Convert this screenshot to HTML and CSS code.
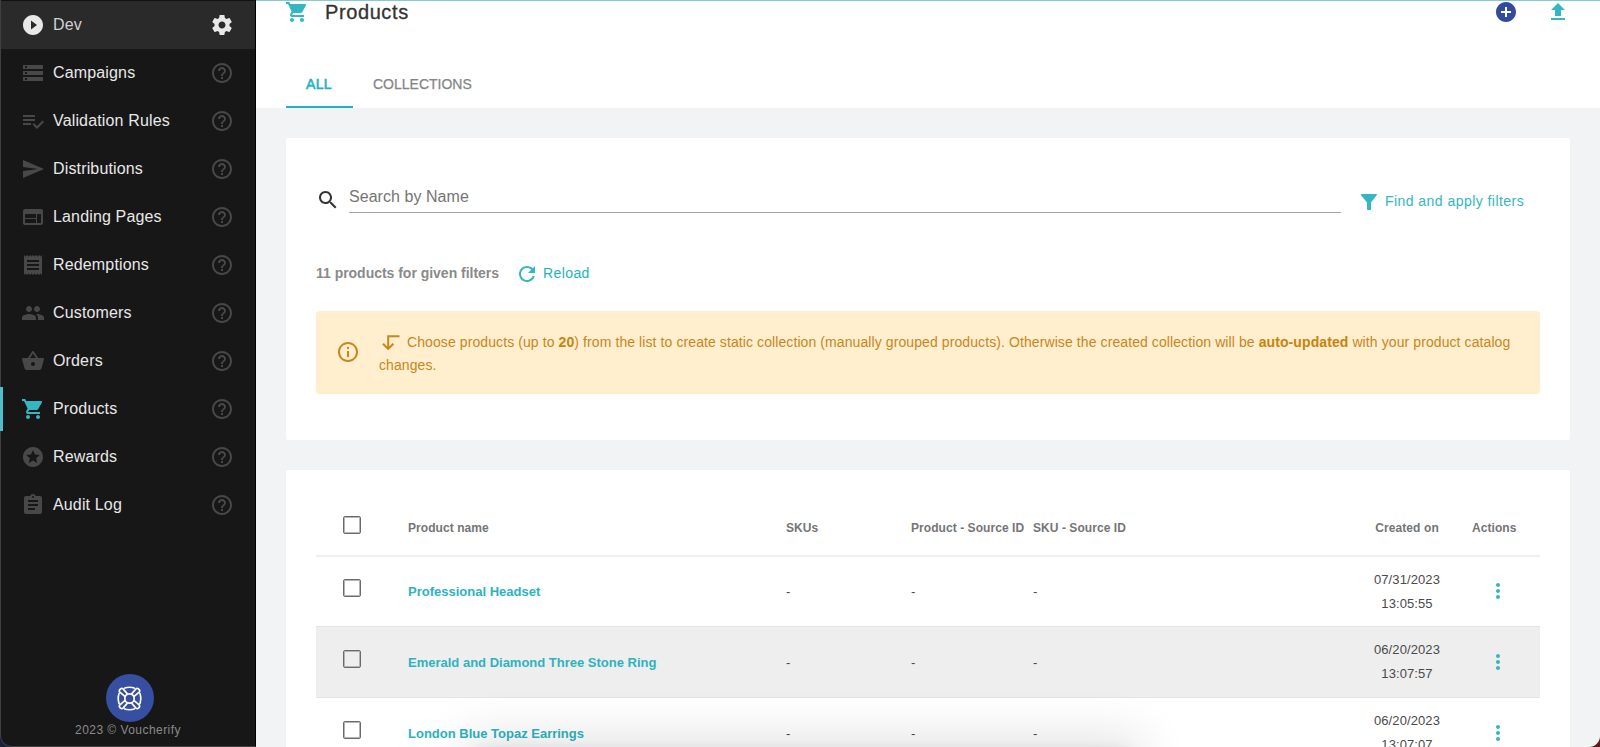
FILE: index.html
```html
<!DOCTYPE html>
<html lang="en">
<head>
<meta charset="utf-8">
<title>Products</title>
<link rel="stylesheet" href="styles.css">
</head>
<body>
<svg class="defs" aria-hidden="true">
  <symbol id="help" viewBox="0 0 24 24"><path d="M11 18h2v-2h-2v2zm1-16C6.480 2 2 6.480 2 12s4.480 10 10 10 10-4.480 10-10S17.520 2 12 2zm0 18c-4.410 0-8-3.590-8-8s3.590-8 8-8 8 3.590 8 8-3.590 8-8 8zm0-14c-2.210 0-4 1.790-4 4h2c0-1.100.9-2 2-2s2 .9 2 2c0 2-3 1.750-3 5h2c0-2.250 3-2.500 3-5 0-2.210-1.790-4-4-4z"/></symbol>
  <symbol id="cart" viewBox="0 0 24 24"><path d="M7 18c-1.100 0-1.990.9-1.990 2S5.900 22 7 22s2-.9 2-2-.9-2-2-2zM1 2v2h2l3.600 7.590-1.350 2.450c-.16.28-.25.61-.25.96 0 1.100.9 2 2 2h12v-2H7.420c-.14 0-.25-.11-.25-.25l.03-.12.9-1.630h7.450c.75 0 1.410-.41 1.750-1.030l3.580-6.490c.08-.14.12-.31.12-.48 0-.55-.45-1-1-1H5.210l-.94-2H1zm16 16c-1.100 0-1.990.9-1.990 2s.89 2 1.990 2 2-.9 2-2-.9-2-2-2z"/></symbol>
  <symbol id="more" viewBox="0 0 24 24"><path d="M12 8c1.100 0 2-.9 2-2s-.9-2-2-2-2 .9-2 2 .9 2 2 2zm0 2c-1.100 0-2 .9-2 2s.9 2 2 2 2-.9 2-2-.9-2-2-2zm0 6c-1.100 0-2 .9-2 2s.9 2 2 2 2-.9 2-2-.9-2-2-2z"/></symbol>
</svg>
<div class="window">
  <aside class="sidebar">
    <div class="project">
      <svg class="icon" viewBox="0 0 24 24"><path d="M12 2C6.480 2 2 6.480 2 12s4.480 10 10 10 10-4.480 10-10S17.520 2 12 2zm-2 14.500v-9l6 4.500-6 4.500z"/></svg>
      <span class="label">Dev</span>
      <svg class="icon" viewBox="0 0 24 24"><path d="M19.430 12.980c.04-.32.07-.64.07-.98s-.03-.66-.07-.98l2.110-1.650c.19-.15.24-.42.12-.64l-2-3.460c-.12-.22-.39-.3-.61-.22l-2.490 1c-.52-.4-1.080-.73-1.690-.98l-.38-2.650C14.460 2.180 14.250 2 14 2h-4c-.25 0-.46.18-.49.42l-.38 2.650c-.61.25-1.170.59-1.690.98l-2.490-1c-.23-.09-.49 0-.61.22l-2 3.460c-.13.22-.07.49.12.64l2.110 1.650c-.04.32-.07.65-.07.98s.03.66.07.98l-2.110 1.650c-.19.15-.24.42-.12.64l2 3.460c.12.22.39.3.61.22l2.490-1c.52.4 1.080.73 1.690.98l.38 2.650c.03.24.24.42.49.42h4c.25 0 .46-.18.49-.42l.38-2.650c.61-.25 1.170-.59 1.690-.98l2.490 1c.23.09.49 0 .61-.22l2-3.460c.12-.22.07-.49-.12-.64l-2.110-1.650zM12 15.500c-1.930 0-3.500-1.570-3.500-3.500s1.570-3.500 3.500-3.500 3.500 1.570 3.500 3.500-1.570 3.500-3.500 3.500z"/></svg>
    </div>
    <nav class="menu">
      <a class="item"><svg class="icon" viewBox="0 0 24 24"><path d="M2 20h20v-4H2v4zm2-3h2v2H4v-2zM2 4v4h20V4H2zm4 3H4V5h2v2zm-4 7h20v-4H2v4zm2-3h2v2H4v-2z"/></svg><span class="label">Campaigns</span><svg class="icon"><use href="#help"/></svg></a>
      <a class="item"><svg class="icon" viewBox="0 0 24 24"><path d="M14 10H2v2h12v-2zm0-4H2v2h12V6zM2 16h8v-2H2v2zm19.500-4.500L23 13l-6.990 7-4.510-4.500L13 14l3.010 3 5.490-5.500z"/></svg><span class="label">Validation Rules</span><svg class="icon"><use href="#help"/></svg></a>
      <a class="item"><svg class="icon" viewBox="0 0 24 24"><path d="M2.010 21L23 12 2.010 3 2 10l15 2-15 2z"/></svg><span class="label">Distributions</span><svg class="icon"><use href="#help"/></svg></a>
      <a class="item"><svg class="icon" viewBox="0 0 24 24"><path d="M20 4H4c-1.100 0-1.990.9-1.990 2L2 18c0 1.100.9 2 2 2h16c1.100 0 2-.9 2-2V6c0-1.100-.9-2-2-2zm-5 14H4v-4h11v4zm0-5H4V9h11v4zm5 5h-4V9h4v9z"/></svg><span class="label">Landing Pages</span><svg class="icon"><use href="#help"/></svg></a>
      <a class="item"><svg class="icon" viewBox="0 0 24 24"><path d="M18 17H6v-2h12v2zm0-4H6v-2h12v2zm0-4H6V7h12v2zM3 22l1.500-1.500L6 22l1.500-1.500L9 22l1.500-1.500L12 22l1.500-1.500L15 22l1.500-1.500L18 22l1.500-1.500L21 22V2l-1.500 1.500L18 2l-1.500 1.500L15 2l-1.500 1.500L12 2l-1.500 1.500L9 2 7.500 3.500 6 2 4.500 3.500 3 2v20z"/></svg><span class="label">Redemptions</span><svg class="icon"><use href="#help"/></svg></a>
      <a class="item"><svg class="icon" viewBox="0 0 24 24"><path d="M16 11c1.660 0 2.990-1.340 2.990-3S17.660 5 16 5c-1.660 0-3 1.340-3 3s1.340 3 3 3zm-8 0c1.660 0 2.990-1.340 2.990-3S9.660 5 8 5C6.340 5 5 6.340 5 8s1.340 3 3 3zm0 2c-2.330 0-7 1.170-7 3.500V19h14v-2.500c0-2.330-4.670-3.500-7-3.500zm8 0c-.29 0-.62.02-.97.05 1.160.84 1.970 1.970 1.970 3.450V19h6v-2.500c0-2.330-4.670-3.500-7-3.500z"/></svg><span class="label">Customers</span><svg class="icon"><use href="#help"/></svg></a>
      <a class="item"><svg class="icon" viewBox="0 0 24 24"><path d="M17.210 9l-4.380-6.560c-.19-.28-.51-.42-.83-.42-.32 0-.64.14-.83.430L6.790 9H2c-.55 0-1 .45-1 1 0 .09.01.18.04.27l2.540 9.270c.23.84 1 1.460 1.920 1.460h13c.92 0 1.690-.62 1.930-1.460l2.540-9.270L23 10c0-.55-.45-1-1-1h-4.790zM9 9l3-4.400L15 9H9zm3 8c-1.100 0-2-.9-2-2s.9-2 2-2 2 .9 2 2-.9 2-2 2z"/></svg><span class="label">Orders</span><svg class="icon"><use href="#help"/></svg></a>
      <a class="item item-active"><svg class="icon"><use href="#cart"/></svg><span class="label">Products</span><svg class="icon"><use href="#help"/></svg></a>
      <a class="item"><svg class="icon" viewBox="0 0 24 24"><path d="M11.990 2C6.470 2 2 6.480 2 12s4.470 10 9.990 10C17.520 22 22 17.520 22 12S17.520 2 11.990 2zm4.240 16L12 15.450 7.770 18l1.120-4.810-3.730-3.230 4.920-.42L12 5l1.920 4.530 4.920.42-3.730 3.230L16.230 18z"/></svg><span class="label">Rewards</span><svg class="icon"><use href="#help"/></svg></a>
      <a class="item"><svg class="icon" viewBox="0 0 24 24"><path d="M19 3h-4.180C14.400 1.840 13.300 1 12 1c-1.300 0-2.400.84-2.820 2H5c-1.100 0-2 .9-2 2v14c0 1.100.9 2 2 2h14c1.100 0 2-.9 2-2V5c0-1.100-.9-2-2-2zm-7 0c.55 0 1 .45 1 1s-.45 1-1 1-1-.45-1-1 .45-1 1-1zm2 14H7v-2h7v2zm3-4H7v-2h10v2zm0-4H7V7h10v2z"/></svg><span class="label">Audit Log</span><svg class="icon"><use href="#help"/></svg></a>
    </nav>
    <footer class="foot">
      <button class="support" aria-label="Support"><svg viewBox="0 0 24 24"><circle cx="12" cy="12" r="4.500"/><path d="M6.800 2.100C10.200.9 13.800.9 17.200 2.100M6.800 21.900C10.200 23.100 13.800 23.100 17.200 21.900M2.100 6.800C.9 10.200.9 13.800 2.100 17.200M21.900 6.800C23.100 10.200 23.100 13.800 21.900 17.200M7.800 10.200L2.500 5.600Q1.800 4.600 2.700 3.400L3.400 2.700Q4.600 1.800 5.600 2.500L10.200 7.800M16.200 10.200L21.500 5.600Q22.200 4.600 21.300 3.400L20.600 2.700Q19.400 1.800 18.400 2.500L13.800 7.800M7.800 13.800L2.500 18.400Q1.800 19.400 2.700 20.600L3.400 21.300Q4.600 22.200 5.600 21.500L10.200 16.200M16.200 13.800L21.500 18.400Q22.200 19.400 21.300 20.600L20.600 21.300Q19.400 22.200 18.400 21.500L13.800 16.200"/></svg></button>
      <span>2023 © Voucherify</span>
    </footer>
  </aside>
  <main class="main">
    <header class="header">
      <div class="title-row">
        <svg class="icon teal"><use href="#cart"/></svg>
        <h1 class="title">Products</h1>
        <svg class="icon navy" viewBox="0 0 24 24"><path d="M12 2C6.480 2 2 6.480 2 12s4.480 10 10 10 10-4.480 10-10S17.520 2 12 2zm5 11h-4v4h-2v-4H7v-2h4V7h2v4h4v2z"/></svg>
        <svg class="icon teal upload" viewBox="0 0 24 24"><path d="M9 16h6v-6h4l-7-7-7 7h4v6zm-4 2h14v2H5v-2z"/></svg>
      </div>
      <div class="tabs"><a class="tab tab-active">ALL</a><a class="tab">COLLECTIONS</a></div>
    </header>
    <section class="card filters">
      <div class="search-row">
        <svg class="icon dark search-icon" viewBox="0 0 24 24"><path d="M15.500 14h-.79l-.28-.27C15.410 12.590 16 11.110 16 9.500 16 5.910 13.090 3 9.500 3S3 5.910 3 9.500 5.910 16 9.500 16c1.610 0 3.090-.59 4.230-1.570l.27.28v.79l5 4.990L20.490 19l-4.990-5zm-6 0C7.010 14 5 11.990 5 9.500S7.010 5 9.500 5 14 7.010 14 9.500 11.990 14 9.500 14z"/></svg>
        <div class="search">Search by Name</div>
        <a class="filter-link"><svg viewBox="0 0 16 16"><path d="M0 .8Q0 0 .8 0H15.200Q16 0 16 .8L10 8.500V15.200Q10 16 9.200 16H6.800Q6 16 6 15.200V8.500L0 1.200z"/></svg><span>Find and apply filters</span></a>
      </div>
      <div class="count-row">
        <strong class="count">11 products for given filters</strong>
        <svg class="icon teal" viewBox="0 0 24 24"><path d="M17.650 6.350C16.200 4.900 14.210 4 12 4c-4.420 0-7.990 3.580-7.990 8s3.570 8 7.990 8c3.730 0 6.840-2.550 7.730-6h-2.080c-.82 2.330-3.040 4-5.650 4-3.310 0-6-2.690-6-6s2.690-6 6-6c1.660 0 3.140.69 4.220 1.780L13 11h7V4l-2.350 2.350z"/></svg>
        <a class="reload">Reload</a>
      </div>
      <div class="notice">
        <svg class="icon" viewBox="0 0 24 24"><path d="M11 7h2v2h-2zm0 4h2v6h-2zm1-9C6.480 2 2 6.480 2 12s4.480 10 10 10 10-4.480 10-10S17.520 2 12 2zm0 18c-4.410 0-8-3.590-8-8s3.590-8 8-8 8 3.590 8 8-3.590 8-8 8z"/></svg>
        <p class="notice-text"><svg class="arrow" viewBox="0 0 18 16"><path d="M17.500 1.300H6.200V13.500M1 8.700L6.200 13.900L11.400 8.700"/></svg>Choose products (up to <b>20</b>) from the list to create static collection (manually grouped products). Otherwise the created collection will be <b>auto-updated</b> with your product catalog<br>changes.</p>
      </div>
    </section>
    <section class="card list">
      <div class="row head"><span class="box"></span><span>Product name</span><span>SKUs</span><span>Product - Source ID</span><span>SKU - Source ID</span><span class="date">Created on</span><span class="actions">Actions</span></div>
      <div class="row"><span class="box"></span><a class="name">Professional Headset</a><span>-</span><span>-</span><span>-</span><span class="date">07/31/2023<br>13:05:55</span><svg class="icon teal more"><use href="#more"/></svg></div>
      <div class="row row-hover"><span class="box"></span><a class="name">Emerald and Diamond Three Stone Ring</a><span>-</span><span>-</span><span>-</span><span class="date">06/20/2023<br>13:07:57</span><svg class="icon teal more"><use href="#more"/></svg></div>
      <div class="row"><span class="box"></span><a class="name">London Blue Topaz Earrings</a><span>-</span><span>-</span><span>-</span><span class="date">06/20/2023<br>13:07:07</span><svg class="icon teal more"><use href="#more"/></svg></div>
    </section>
    <div class="bottom-shadow"></div>
  </main>
</div>
</body>
</html>
```
FILE: styles.css
```css
* { box-sizing: border-box; }
body {
  margin: 0;
  height: 747px;
  overflow: hidden;
  background: linear-gradient(90deg, #15243c 50%, #5d1d16 50%);
  font-family: "Liberation Sans", Arial, sans-serif;
  color: #4a4a4a;
}
.defs { position: absolute; width: 0; height: 0; }
.window {
  display: flex;
  height: 747px;
  overflow: hidden;
  border-radius: 0 0 11px 11px;
}
.icon { width: 24px; height: 24px; flex: none; fill: currentColor; }
.teal { color: #35b6c3; }
.navy { color: #344a9e; }
.dark { color: #333; }

.sidebar {
  display: flex;
  flex-direction: column;
  width: 256px;
  flex: none;
  background: #171717;
  border-left: 1px solid #404040;
  border-right: 1px solid #000;
  border-bottom: 1px solid #404040;
  border-radius: 0 0 0 11px;
}
.project, .item {
  display: flex;
  align-items: center;
  height: 48px;
  padding: 0 21px 0 20px;
  font-size: 16px;
  letter-spacing: .15px;
  color: #e8e8e8;
}
.project { height: 49px; background: #2a2a2a; border-top: 1px solid #111; }
.project .label { color: #d2d2d2; }
.label { flex: 1; padding-left: 8px; }
.item .icon { color: #484848; }
.item-active { position: relative; }
.item-active::before {
  content: "";
  position: absolute;
  left: -1px;
  top: 2px;
  width: 3px;
  height: 44px;
  background: #4fc0cb;
}
.item-active .icon:first-child { color: #35b6c3; }
.foot {
  display: flex;
  flex-direction: column;
  align-items: center;
  margin-top: auto;
  padding: 0 0 8px 3px;
  font-size: 12px;
  line-height: 16px;
  letter-spacing: .45px;
  color: #8a8a8a;
}
.foot span { margin-right: 3px; }
.support {
  display: flex;
  align-items: center;
  justify-content: center;
  width: 48px;
  height: 48px;
  border: 0;
  padding: 0;
  border-radius: 50%;
  background: #364fa1;
}
.support svg { width: 25px; height: 25px; fill: none; stroke: #fff; stroke-width: 1.6; }

.main {
  position: relative;
  flex: 1;
  min-width: 0;
  background: #f2f3f5;
}
.header { height: 108px; background: #fff; border-top: 1px solid #84cbd2; padding: 0 30px; }
.title-row { display: flex; align-items: center; height: 21px; margin: 0 0 0 -1px; }
.title { flex: 1; margin: 1px 0 0 16px; font-size: 20px; font-weight: 400; letter-spacing: .6px; color: #333; -webkit-text-stroke: .3px #333; }
.upload { margin-left: 28px; }
.tabs { display: flex; margin-top: 39px; }
.tab {
  height: 47px;
  padding: 0 20px;
  line-height: 46px;
  font-size: 14px;
  color: #858585;
  -webkit-text-stroke: .25px;
}
.tab-active { width: 67px; color: #22b3c1; border-bottom: 2px solid #22b3c1; -webkit-text-stroke: .6px; letter-spacing: .3px; }

.card { margin: 30px 30px 0; padding: 0 30px; background: #fff; border-radius: 2px; }
.filters { height: 302px; padding-top: 43px; }
.search-row { display: flex; align-items: center; height: 32px; }
.search-icon { margin-top: 5px; }
.search {
  flex: 1;
  height: 32px;
  margin: 0 20px 0 9px;
  border-bottom: 1px solid #a6a6a6;
  font-size: 16px;
  line-height: 32px;
  letter-spacing: .05px;
  color: #757575;
}
.filter-link { display: flex; align-items: center; gap: 8px; width: 179px; margin-top: 7px; font-size: 14px; letter-spacing: .45px; color: #35b6c3; }
.filter-link svg { width: 16px; height: 16px; margin-top: 2px; fill: currentColor; }
.count-row { display: flex; align-items: center; height: 24px; margin-top: 49px; font-size: 14px; }
.count { margin-top: -2px; color: #8a8a8a; width: 199px; white-space: nowrap; letter-spacing: -.02px; }
.reload { margin: -2px 0 0 4px; color: #22b3c1; letter-spacing: .4px; }
.notice {
  display: flex;
  align-items: center;
  height: 83px;
  margin-top: 25px;
  padding: 0 20px;
  border-radius: 3px;
  background: #ffefcf;
  color: #cb8519;
}
.notice > .icon { margin-top: -1px; }
.notice-text { margin: 3px 0 0 19px; font-size: 14px; line-height: 23px; letter-spacing: .092px; white-space: nowrap; }
.notice-text b { color: #c9820c; }
.arrow { width: 18px; height: 16px; margin: 0 7px 0 3px; vertical-align: -4px; fill: none; stroke: currentColor; stroke-width: 2; }

.list { padding-top: 30px; height: 300px; }
.row {
  display: grid;
  grid-template-columns: 92px 378px 125px 122px 322px 104px 81px;
  align-items: center;
  height: 70.67px;
  padding-top: 1px;
  border-bottom: 1px solid #e4e4e4;
  font-size: 13px;
}
.head {
  height: 56.5px;
  padding-top: 2px;
  font-size: 12px;
  font-weight: 700;
  color: #757575;
  border-bottom: 2px solid #f0f0f0;
  letter-spacing: .06px;
}
.row-hover { background: #eee; }
.box {
  width: 18px;
  height: 18px;
  margin: -7px 0 0 27px;
  border: 1px solid #6a6a6a;
  border-radius: 2px;
  box-shadow: inset 0 0 0 1px #b5b5b5;
}
.name { font-weight: 700; color: #2db3c0; }
.date { text-align: center; line-height: 24px; letter-spacing: .1px; }
.actions { padding-left: 13px; }
.more { margin: -1px 0 0 27px; }
.bottom-shadow {
  position: absolute;
  left: 130px;
  right: 380px;
  bottom: 0;
  height: 55px;
  overflow: hidden;
  pointer-events: none;
}
.bottom-shadow::before {
  content: "";
  display: block;
  margin: 57px 90px 0;
  height: 20px;
  box-shadow: 0 0 50px 12px rgba(0, 0, 0, .12), 0 0 12px 2px rgba(0, 0, 0, .06);
}
```
